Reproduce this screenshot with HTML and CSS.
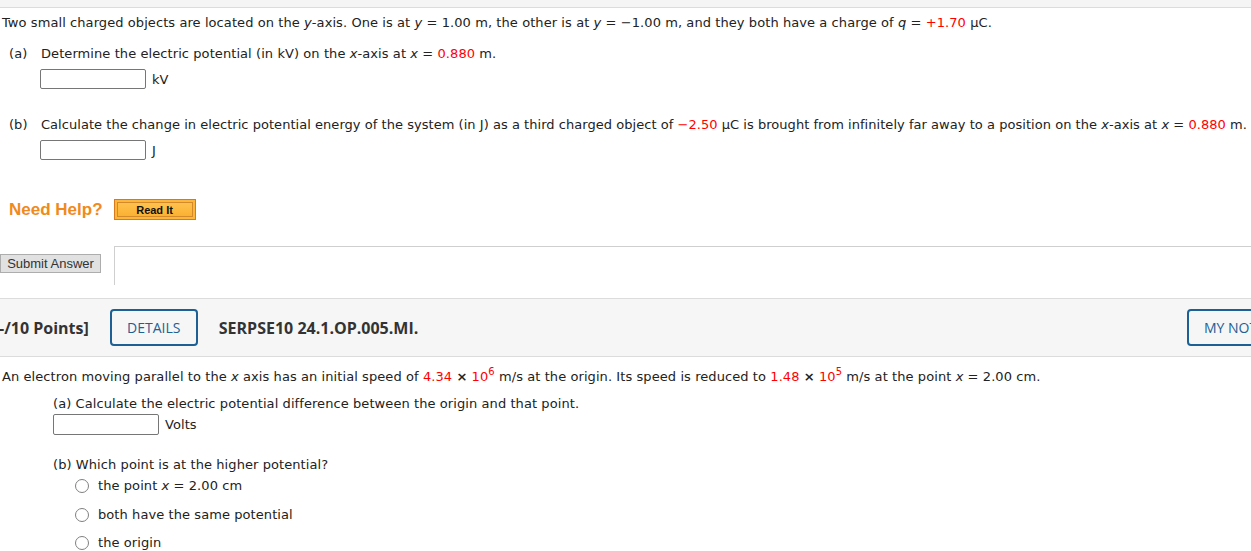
FILE: index.html
```html
<!DOCTYPE html>
<html>
<head>
<meta charset="utf-8">
<link rel="stylesheet" href="styles.css">
</head>
<body>
<div class="topband"></div>
<section class="q1">
  <p class="stem">Two small charged objects are located on the <i>y</i>-axis. One is at <i>y</i> = 1.00 m, the other is at <i>y</i> = &minus;1.00 m, and they both have a charge of <i>q</i> = <span class="red">+1.70</span> &mu;C.</p>
  <div class="part pa"><span class="plabel">(a)</span><span>Determine the electric potential (in kV) on the <i>x</i>-axis at <i>x</i> = <span class="red">0.880</span> m.</span></div>
  <div class="answer"><span class="box"></span><span class="unit">kV</span></div>
  <div class="part pb"><span class="plabel">(b)</span><span>Calculate the change in electric potential energy of the system (in J) as a third charged object of <span class="red">&minus;2.50</span> &mu;C is brought from infinitely far away to a position on the <i>x</i>-axis at <i>x</i> = <span class="red">0.880</span> m.</span></div>
  <div class="answer"><span class="box"></span><span class="unit">J</span></div>
  <div class="help"><span class="needhelp">Need Help?</span><span class="readit"><span class="readit-inner">Read It</span></span></div>
  <div class="submitrow"><span class="submit">Submit Answer</span><div class="notebox"></div></div>
</section>
<header class="qhead">
  <span class="points">-/10 Points]</span>
  <span class="btn details">DETAILS</span>
  <span class="qid">SERPSE10 24.1.OP.005.MI.</span>
  <span class="spacer"></span>
  <span class="btn notes">MY NOTES</span>
</header>
<section class="q2">
  <p class="stem">An electron moving parallel to the <i>x</i> axis has an initial speed of <span class="red">4.34</span> <b class="times">&times;</b> <span class="red">10<sup>6</sup></span> m/s at the origin. Its speed is reduced to <span class="red">1.48</span> <b class="times">&times;</b> <span class="red">10<sup>5</sup></span> m/s at the point <i>x</i> = 2.00 cm.</p>
  <div class="sub">
    <p class="q2a">(a) Calculate the electric potential difference between the origin and that point.</p>
    <div class="answer a2"><span class="box"></span><span class="unit">Volts</span></div>
    <p class="q2b">(b) Which point is at the higher potential?</p>
    <ul class="choices">
      <li><span class="radio"></span><span>the point <i>x</i> = 2.00 cm</span></li>
      <li><span class="radio"></span><span>both have the same potential</span></li>
      <li><span class="radio"></span><span>the origin</span></li>
    </ul>
  </div>
</section>
</body>
</html>
```

FILE: styles.css
```css
html, body {
  margin: 0;
  padding: 0;
  background: #fff;
  overflow: hidden;
}
body {
  font-family: Verdana, "DejaVu Sans", sans-serif;
  font-size: 13px;
  line-height: 16px;
  letter-spacing: 0.08px;
  color: #222;
  width: 1251px;
  height: 551px;
}
p { margin: 0; }
i { font-style: italic; }
.red { color: #ff0000; }
.times { font-weight: bold; }
sup {
  font-size: 10px;
  line-height: 0;
  vertical-align: 6px;
}
.topband {
  height: 7px;
  background: #f5f5f5;
  border-bottom: 1px solid #dcdcdc;
}
.q1 {
  padding-left: 2px;
}
.q1 .stem {
  margin-top: 7px;
  white-space: nowrap;
}
.part {
  display: flex;
  white-space: nowrap;
}
.pa { margin-top: 15px; }
.pb {
  margin-top: 28px;
  letter-spacing: 0.04px;
}
.plabel {
  flex-shrink: 0;
  width: 32px;
  padding-left: 7px;
}
.answer {
  display: flex;
  align-items: center;
  margin-top: 7px;
  padding-left: 38px;
  height: 20px;
}
.box {
  display: inline-block;
  width: 104px;
  height: 18px;
  border: 1px solid #767676;
  border-radius: 2px;
  background: #fff;
}
.unit {
  margin-left: 6px;
  position: relative;
  top: 1px;
}
.pb + .answer { margin-top: 7px; }
.help {
  display: flex;
  align-items: center;
  margin-top: 39px;
  height: 21px;
  padding-left: 7px;
  letter-spacing: 0;
}
.needhelp {
  font-family: "Liberation Sans", Arial, sans-serif;
  font-weight: bold;
  font-size: 17px;
  color: #f08a1c;
}
.readit {
  margin-left: 11px;
  display: inline-flex;
  border: 1px solid #d9781c;
  background: #fdb53a;
  padding: 2px;
  box-sizing: border-box;
  height: 21px;
  width: 82px;
}
.readit-inner {
  flex: 1;
  border: 1px solid #d58a2a;
  background: linear-gradient(#ffc24e, #fbb132);
  font-family: "Liberation Sans", Arial, sans-serif;
  font-weight: bold;
  font-size: 11px;
  line-height: 14px;
  color: #111;
  text-align: center;
}
.submitrow {
  display: flex;
  align-items: flex-start;
  margin-top: 26px;
  margin-left: -2px;
  height: 38px;
  letter-spacing: 0;
}
.submit {
  margin-top: 8px;
  font-family: "Liberation Sans", Arial, sans-serif;
  font-size: 13px;
  line-height: 17px;
  color: #333;
  background: #e1e1e1;
  border: 1px solid #adadad;
  padding: 0 5px;
  width: 89px;
  text-align: center;
}
.notebox {
  margin-left: 13px;
  flex: 1;
  height: 38px;
  border-top: 1px solid #cfcfcf;
  border-left: 1px solid #cfcfcf;
}
.qhead {
  margin-top: 14px;
  background: #f6f6f6;
  border-top: 1px solid #dcdcdc;
  border-bottom: 1px solid #dcdcdc;
  display: flex;
  align-items: center;
  font-family: "Open Sans", sans-serif;
  letter-spacing: 0;
  white-space: nowrap;
  overflow: hidden;
  box-sizing: border-box;
  height: 59px;
}
.points {
  font-weight: bold;
  font-size: 16px;
  color: #333;
  margin-left: -1px;
}
.btn {
  display: inline-flex;
  align-items: center;
  justify-content: center;
  box-sizing: border-box;
  height: 37px;
  border: 2px solid #1d6094;
  border-radius: 4px;
  color: #1d6094;
  font-size: 14px;
  background: #f6f6f6;
}
.details {
  margin-left: 21px;
  width: 88px;
}
.qid {
  margin-left: 21px;
  font-weight: bold;
  font-size: 16px;
  color: #333;
}
.spacer { flex: 1; }
.notes {
  width: 100px;
  margin-right: -36px;
  justify-content: flex-start;
  padding-left: 15px;
  flex-shrink: 0;
}
.q2 {
  padding-left: 2px;
}
.q2 .stem {
  margin-top: 12px;
  white-space: nowrap;
}
.sub {
  padding-left: 51px;
}
.q2a {
  margin-top: 11px;
}
.a2 {
  padding-left: 0;
  margin-top: 2px;
  height: 21px;
}
.a2 .box {
  height: 19px;
}
.a2 .unit { top: 0; }
.q2b {
  margin-top: 22px;
}
.choices {
  list-style: none;
  margin: 5px 0 0 0;
  padding: 0 0 0 22px;
}
.choices li {
  display: flex;
  align-items: center;
  height: 16px;
  margin-bottom: 13px;
}
.choices li:nth-child(2) { margin-bottom: 12px; }
.radio {
  display: inline-block;
  width: 12px;
  height: 12px;
  border: 1px solid #808080;
  border-radius: 50%;
  background: #fff;
  margin-right: 9px;
}
```
